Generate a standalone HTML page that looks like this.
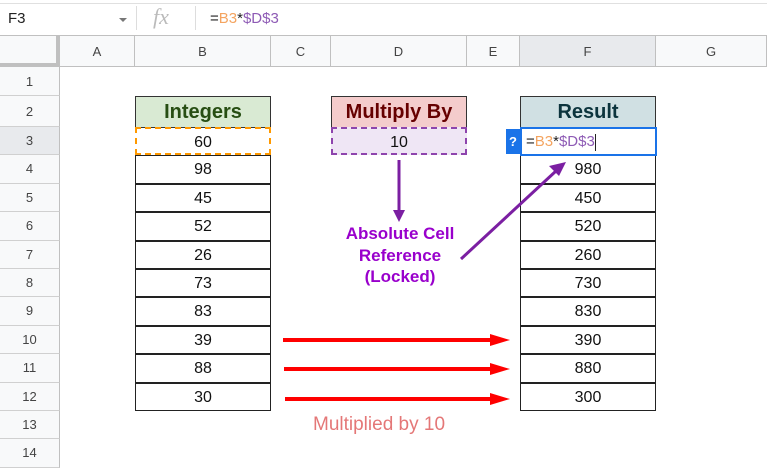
<!DOCTYPE html>
<html><head><style>
body{margin:0;width:767px;height:470px;overflow:hidden;background:#fff;font-family:"Liberation Sans",Arial,sans-serif;position:relative}
.a{position:absolute;box-sizing:border-box}
.hc{position:absolute;top:36px;height:31px;background:#f8f9fa;border-right:1px solid #c0c0c0;border-bottom:1px solid #c0c0c0;color:#444;font-size:13px;text-align:center;line-height:31px;box-sizing:border-box}
.rh{position:absolute;left:0;width:60px;background:#f8f9fa;border-right:1px solid #c0c0c0;border-bottom:1px solid #d0d0d0;color:#444;font-size:13px;text-align:center;box-sizing:border-box}
.cell{position:absolute;width:136px;height:28.4px;border:1px solid #222;box-sizing:border-box;text-align:center;font-size:16px;line-height:27px;color:#111}
.hd{position:absolute;width:136px;height:32px;border:1.5px solid #333;box-sizing:border-box;text-align:center;font-size:20px;font-weight:bold;line-height:30px}
</style></head><body>
<div class="a" style="left:0;top:0;width:767px;height:4px;border-bottom:1px solid #e0e0e0"></div>
<div class="a" style="left:8px;top:10px;font-size:15px;color:#222">F3</div>
<div class="a" style="left:119px;top:18px;width:0;height:0;border-left:4px solid transparent;border-right:4px solid transparent;border-top:4px solid #777"></div>
<div class="a" style="left:136px;top:6px;width:1px;height:24px;background:#ddd"></div>
<div class="a" style="left:153px;top:4px;font-size:22px;font-style:italic;color:#bbb;font-family:'Liberation Serif',serif">fx</div>
<div class="a" style="left:195px;top:6px;width:1px;height:24px;background:#ddd"></div>
<div class="a" style="left:210px;top:10px;font-size:15px;color:#222">=<span style="color:#f4a460">B3</span>*<span style="color:#8e5bb5">$D$3</span></div>
<div class="a" style="left:0;top:35px;width:767px;height:1px;background:#c0c0c0"></div>
<div class="hc" style="left:0;width:60px;border-right:4px solid #c0c0c0;border-bottom:4px solid #c0c0c0"></div>
<div class="hc" style="left:60px;width:75px">A</div>
<div class="hc" style="left:135px;width:136px">B</div>
<div class="hc" style="left:271px;width:60px">C</div>
<div class="hc" style="left:331px;width:136px">D</div>
<div class="hc" style="left:467px;width:53px">E</div>
<div class="hc" style="left:520px;width:136px;background:#e8eaed">F</div>
<div class="hc" style="left:656px;width:111px">G</div>
<div class="rh" style="top:67px;height:29px;line-height:29px">1</div>
<div class="rh" style="top:96px;height:31px;line-height:31px">2</div>
<div class="rh" style="top:127px;height:28.4px;line-height:28px;background:#e8eaed">3</div>
<div class="rh" style="top:155.4px;height:28.4px;line-height:28px">4</div>
<div class="rh" style="top:183.8px;height:28.4px;line-height:28px">5</div>
<div class="rh" style="top:212.2px;height:28.4px;line-height:28px">6</div>
<div class="rh" style="top:240.6px;height:28.4px;line-height:28px">7</div>
<div class="rh" style="top:269px;height:28.4px;line-height:28px">8</div>
<div class="rh" style="top:297.4px;height:28.4px;line-height:28px">9</div>
<div class="rh" style="top:325.8px;height:28.4px;line-height:28px">10</div>
<div class="rh" style="top:354.2px;height:28.4px;line-height:28px">11</div>
<div class="rh" style="top:382.6px;height:28.4px;line-height:28px">12</div>
<div class="rh" style="top:411px;height:28.4px;line-height:28px">13</div>
<div class="rh" style="top:439.4px;height:28.4px;line-height:28px">14</div>

<div class="hd" style="left:135px;top:96px;background:#d9ead3;color:#274e13">Integers</div>
<div class="hd" style="left:331px;top:96px;background:#f4cccc;color:#660000">Multiply By</div>
<div class="hd" style="left:520px;top:96px;background:#d0e0e3;color:#0c343d">Result</div>

<div class="cell" style="left:135px;top:127px;border:2px dashed #ff9900">60</div>
<div class="cell" style="left:135px;top:155.4px">98</div>
<div class="cell" style="left:135px;top:183.8px">45</div>
<div class="cell" style="left:135px;top:212.2px">52</div>
<div class="cell" style="left:135px;top:240.6px">26</div>
<div class="cell" style="left:135px;top:269px">73</div>
<div class="cell" style="left:135px;top:297.4px">83</div>
<div class="cell" style="left:135px;top:325.8px">39</div>
<div class="cell" style="left:135px;top:354.2px">88</div>
<div class="cell" style="left:135px;top:382.6px">30</div>

<div class="cell" style="left:331px;top:127px;background:#efe6f5;border:2px dashed #8e44ad">10</div>

<div class="cell" style="left:520px;top:155.4px">980</div>
<div class="cell" style="left:520px;top:183.8px">450</div>
<div class="cell" style="left:520px;top:212.2px">520</div>
<div class="cell" style="left:520px;top:240.6px">260</div>
<div class="cell" style="left:520px;top:269px">730</div>
<div class="cell" style="left:520px;top:297.4px">830</div>
<div class="cell" style="left:520px;top:325.8px">390</div>
<div class="cell" style="left:520px;top:354.2px">880</div>
<div class="cell" style="left:520px;top:382.6px">300</div>
<div class="a" style="left:520px;top:127px;width:137px;height:29px;border:2px solid #1a73e8;background:#fff;font-size:15px;line-height:25px;padding-left:4px;color:#222">=<span style="color:#f4a460">B3</span>*<span style="color:#8e5bb5">$D$3</span><span style="display:inline-block;width:1px;height:17px;background:#222;vertical-align:middle"></span></div>
<div class="a" style="left:506px;top:129px;width:14px;height:25px;background:#1a73e8;color:#fff;font-weight:bold;font-size:13px;text-align:center;line-height:25px">?</div>

<div class="a" style="left:310px;top:223px;width:180px;text-align:center;color:#9900cc;font-weight:bold;font-size:17px;line-height:21.5px">Absolute Cell<br>Reference<br>(Locked)</div>
<div class="a" style="left:313px;top:414px;font-size:19px;color:#e06060;opacity:.85">Multiplied by 10</div>

<svg class="a" style="left:0;top:0" width="767" height="470">
<g stroke="#7b1fa2" stroke-width="3" fill="#7b1fa2">
<line x1="399" y1="160" x2="399" y2="212"/>
<polygon points="393,210 405,210 399,222" stroke="none"/>
<line x1="461" y1="259" x2="556" y2="171"/>
<polygon points="549,166 559,176 566,162" stroke="none"/>
</g>
<g stroke="#ff0000" stroke-width="4" fill="#ff0000">
<line x1="283" y1="340" x2="490" y2="340"/><polygon points="490,334 510,340 490,346" stroke="none"/>
<line x1="284" y1="369" x2="490" y2="369"/><polygon points="490,363 510,369 490,375" stroke="none"/>
<line x1="285" y1="399" x2="490" y2="399"/><polygon points="490,393 510,399 490,405" stroke="none"/>
</g>
</svg>
</body></html>
